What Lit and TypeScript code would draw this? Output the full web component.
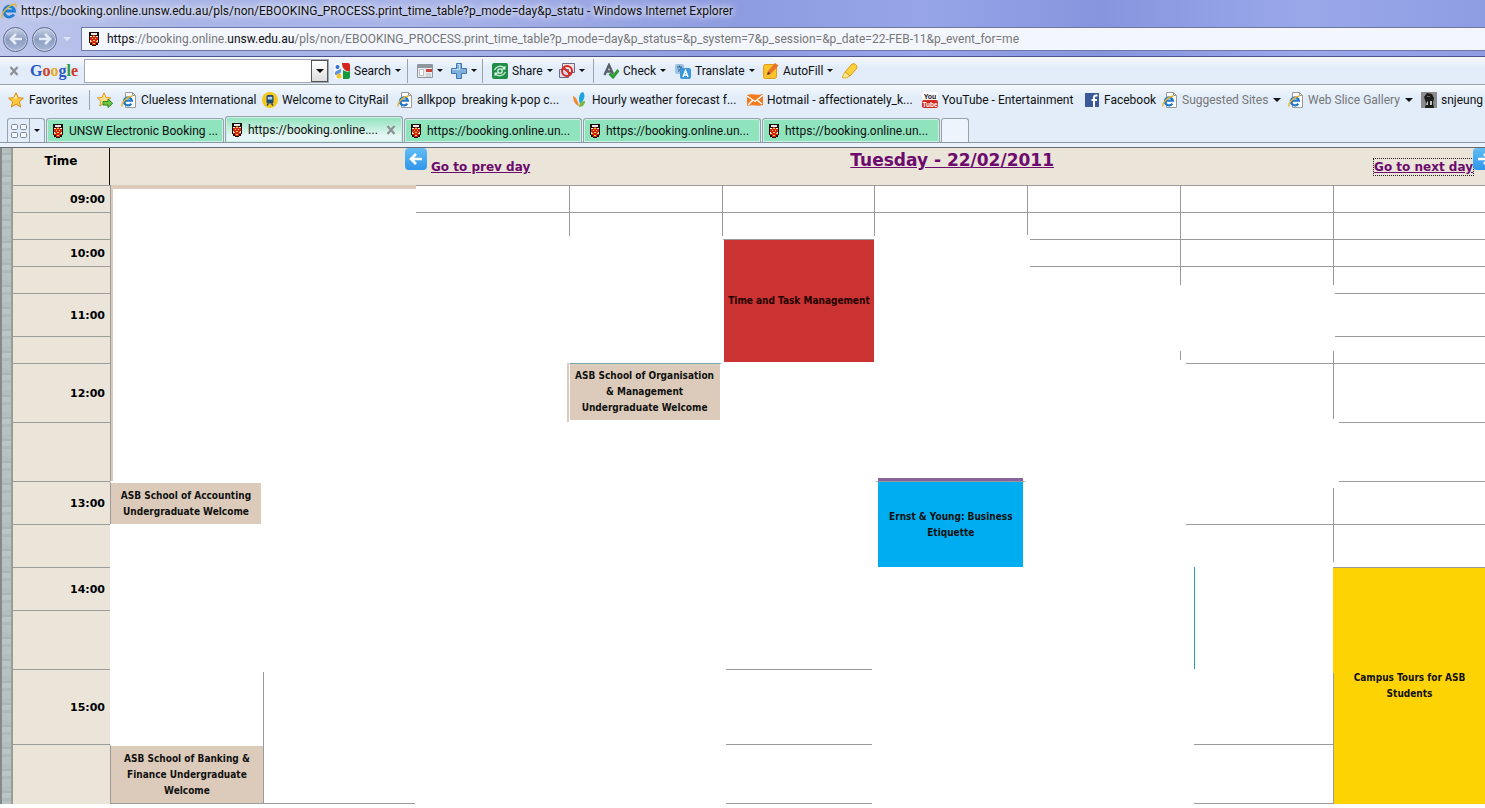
import { LitElement, html, css, svg, nothing, type TemplateResult } from "lit";
import { customElement, property } from "lit/decorators.js";
import { styleMap } from "lit/directives/style-map.js";
import { classMap } from "lit/directives/class-map.js";

const page = svg`<path d="M4.5.5h7l3 3v12h-10z" fill="#fff" stroke="#9a9a9a"/><path d="M11.500.5v3h3" fill="none" stroke="#9a9a9a"/>`;
const eMark = svg`<path d="M10.300 11.600a4 4 0 1 1 .6-2.900H3.500" fill="none" stroke="#1f78c8" stroke-width="2.200"/>
  <path d="M1.200 14.500C-.5 12 5 4.800 11.600 4" fill="none" stroke="#f0b323" stroke-width="1.400"/>`;

const ICONS: Record<string, TemplateResult> = {
  ie: svg`<path d="M12.800 11.600A5.400 5.400 0 1 1 13.600 8H4" fill="none" stroke="#1b7fd2" stroke-width="2.800"/>
    <path d="M1.600 15C-1.500 11.500 8 1 14.500 1.200c1 .3.800 1.800.2 3" fill="none" stroke="#e9b42c" stroke-width="1.400"/>`,
  iepage: svg`${page}${eMark}`,
  crest: svg`<g shape-rendering="crispEdges"><path d="M3 1h10v11h-1v2h-2v1H6v-1H4v-2H3z" fill="#1c0d08"/>
    <path d="M5 2h6v2H5z" fill="#e8e8ee"/><path d="M4 5h8v7H4z" fill="#f6ead2"/>
    <path d="M7 4h2v1h1v1h2v3h-1v2h1v1h-2v2H6v-2H4v-1h1V9H4V6h2V5h1z" fill="#d3261a"/>
    <path d="M7 5h2v1H7zM6 7h1v1H6zM9 7h1v1H9zM7 9h2v1H7zM5 10h1v1H5zM10 10h1v1h-1zM7 12h2v1H7z" fill="#ffcf3a"/></g>`,
  star: svg`<path d="M8 .8l2.200 4.900 5.200.5-4 3.500 1.200 5.300L8 12.300 3.400 15l1.200-5.300-4-3.500 5.200-.5z" fill="#fcc63d" stroke="#dd8a12"/>
    <path d="M8 3l1.300 3.500-4 .3z" fill="#fff0b0"/>`,
  staradd: svg`<path d="M7 .8l2 4.600 4.800.5-3.600 3.300L11.300 14 7 11.600 2.800 14l1-4.800L.4 5.900l4.700-.5z" fill="#ffe08a" stroke="#dd9a22"/>
    <path d="M6 9.500h5V7l4.700 4.300L11 15.500V13H6z" fill="#6cc644" stroke="#2f8a1c"/>`,
  rail: svg`<circle cx="8" cy="8" r="8" fill="#f6c71b"/><rect x="4.500" y="3" width="7" height="8.500" rx="1.500" fill="#1f4a7c"/>
    <path d="M5.800 4.800h4.400v2.700H5.800z" fill="#b9d4ec"/><path d="M5 13.500l1.500-2M11 13.500l-1.500-2" stroke="#1f4a7c" stroke-width="1.300"/>`,
  weather: svg`<path d="M1 4c3 1 5 5 6 10-4-1-6-6-6-10z" fill="#f08a2c"/><path d="M8 12C6 7 7 1 11 0c3 3 1 9-3 12z" fill="#1ba5dc"/>
    <path d="M7 15c0-4 3-6 6-6 0 3-2 6-6 6z" fill="#7cb83c"/>`,
  hotmail: svg`<path d="M0 3c5-2 10 1 16-1v11c-5 2-10-1-16 1z" fill="#f07a1c"/><path d="M0 4l8 5.500L16 3M1 13l5-5M15 12l-5-4" fill="none" stroke="#fff" stroke-width="1.400"/>`,
  youtube: svg`<path d="M0 0h16v8H0z" fill="#fff"/><rect y="8" width="16" height="8" rx="2" fill="#d5281f"/>
    <text x="8" y="6.500" text-anchor="middle" font-family="Liberation Sans" font-weight="700" font-size="7" fill="#111">You</text>
    <text x="8" y="14.500" text-anchor="middle" font-family="Liberation Sans" font-weight="700" font-size="6.500" fill="#fff">Tube</text>`,
  facebook: svg`<path d="M1 1h14v14H1z" fill="#3b5998"/><path d="M13.500 3.500H12c-1.500 0-2 .8-2 2V15M7.500 8h5.500" fill="none" stroke="#fff" stroke-width="2"/>`,
  photo: svg`<path d="M0 0h16v16H0z" fill="#8c8c8c"/><path d="M3 5l3-4 5 1 2 4-1 5 1 5H4l1-5z" fill="#1d1d1d"/><path d="M6 10l1-1v4H5zM9 9h2v4H9z" fill="#c4c4c4"/><path d="M6 4h3v1H6z" fill="#666"/>`,
  gsearch: svg`<rect width="16" height="16" rx="2" fill="#f8f8f8"/><path d="M8 0h6a2 2 0 0 1 2 2v6c-4 1-8-2-8-8z" fill="#d3271c"/>
    <path d="M9 7c3 2 5 2 7 1v6a2 2 0 0 1-2 2H9z" fill="#129a3c"/><circle cx="3.500" cy="4" r="2" fill="#2f6fd6"/><path d="M1 10c0-3 6-3 6-5v4c-1 2-3 3-6 3z" fill="#5b93e6"/>
    <circle cx="5" cy="13" r="2.500" fill="#f6c52b"/>`,
  panel: svg`<path d="M.5 1.500h15v13H.5z" fill="#e9edf0" stroke="#8f979e"/><path d="M1 2h14v3H1z" fill="#8f979e"/><path d="M9 6h6v3H9z" fill="#c8433a"/><path d="M2.500 6.500h4v6h-4zM9 11h5M9 13h5" fill="#fff" stroke="#b8bec4"/>`,
  plus: svg`<path d="M5.500.500h5v5h5v5h-5v5h-5v-5h-5v-5h5z" fill="#7fb0dc" stroke="#3e78ae"/><path d="M6.500 1.500h2v5h-7" fill="none" stroke="#c5def4"/>`,
  share: svg`<rect width="16" height="16" rx="2" fill="#1f8c48"/><circle cx="8" cy="8" r="2.200" fill="none" stroke="#dff5e4" stroke-width="1.300"/>
    <path d="M2.500 7c2-4 7-5 10-2M13.500 9c-2 4-7 5-10 2" fill="none" stroke="#bfe8c8" stroke-width="1.500"/><path d="M13.500 2.500v4h-4zM2.500 13.500v-4h4z" fill="#dff5e4"/>`,
  block: svg`<path d="M3.500.5h12v9h-12z" fill="#f4e4e4" stroke="#6a6a8c"/><path d="M.5 6.500h9v8h-9z" fill="#dcdcec" stroke="#6a6a8c"/>
    <circle cx="8" cy="8" r="5" fill="none" stroke="#d62a24" stroke-width="2"/><path d="M4.500 4.500l7 7" stroke="#d62a24" stroke-width="2"/>`,
  check: svg`<path d="M1.500 12L6 2l4 9M3.500 8.500h5" fill="none" stroke="#59626a" stroke-width="2.400"/><path d="M6.500 10.500l3.500 3.500 5.500-7" fill="none" stroke="#2f9a34" stroke-width="3"/>`,
  translate: svg`<rect x="0" y="1" width="9" height="10" rx="2" fill="#9cc4e4"/><path d="M2 4h5M4.500 2.500V4M3 8.500c2-1 3-2.500 3-4.500M3 5.500l3 3" stroke="#2d5f92" fill="none"/>
    <rect x="5" y="5" width="11" height="11" rx="2" fill="#3b97d8"/><path d="M8 14L10.500 7.500 13 14M9 12h3" stroke="#fff" stroke-width="1.400" fill="none"/>`,
  autofill: svg`<rect x=".5" y="1.500" width="13" height="14" rx="2" fill="#fbc32c" stroke="#e29a16"/><path d="M4 12l1-4 7-8 3.500 2.500-7.500 8z" fill="#e8742a"/><path d="M4 12l1-3.500L7.500 11z" fill="#5a3a1c"/>`,
  marker: svg`<path d="M3 9l7-8c3-1 5 1 5 4l-7 8z" fill="#fbd03a" stroke="#d99b17"/><path d="M3 9l5 4-4 2-4-.5z" fill="#ffe98c" stroke="#d99b17" stroke-width=".8"/>`,
  quick: svg`<g fill="#f4f7fb" stroke="#7b8696"><rect x=".5" y="1.500" width="6" height="5" rx="1"/><rect x="9.500" y="1.500" width="6" height="5" rx="1"/><rect x=".5" y="9.500" width="6" height="5" rx="1"/><rect x="9.500" y="9.500" width="6" height="5" rx="1"/></g>`,
  left: svg`<path d="M8 3L3 8l5 5M3.500 8H14" fill="none" stroke="currentColor" stroke-width="2.600"/>`,
  right: svg`<path d="M8 3l5 5-5 5M12.500 8H2" fill="none" stroke="currentColor" stroke-width="2.600"/>`,
  close: svg`<path d="M4.500 4l7 8M11.500 4l-7 8" fill="none" stroke="#8d9095" stroke-width="2.200"/>`,
};

const icon = (name: string) =>
  html`<svg class="icon" viewBox="0 0 16 16" aria-hidden="true">${ICONS[name]}</svg>`;

const shared = css`
  * { box-sizing: border-box; }
  .icon { width: 16px; height: 16px; flex: none; display: block; }
  .caret { width: 0; height: 0; flex: none; border: 3px solid transparent; border-top-color: #111; border-bottom: 0; }
  button { font: inherit; color: inherit; background: none; border: 0; padding: 0; margin: 0; white-space: nowrap; }
  a { color: inherit; text-decoration: none; }
`;

interface Bookmark { label: string; icon: string; width: number; menu?: boolean; }
const BOOKMARKS: Bookmark[] = [
  { label: "Clueless International", icon: "iepage", width: 141 },
  { label: "Welcome to CityRail", icon: "rail", width: 135 },
  { label: "allkpop  breaking k-pop c...", icon: "iepage", width: 175 },
  { label: "Hourly weather forecast f...", icon: "weather", width: 175 },
  { label: "Hotmail - affectionately_k...", icon: "hotmail", width: 175 },
  { label: "YouTube - Entertainment", icon: "youtube", width: 162 },
  { label: "Facebook", icon: "facebook", width: 78 },
  { label: "Suggested Sites", icon: "iepage", width: 126, menu: true },
  { label: "Web Slice Gallery", icon: "iepage", width: 133, menu: true },
  { label: "snjeung", icon: "photo", width: 64 },
];

interface Tool { label?: string; name: string; icon: string; width: number; menu?: boolean; rule?: boolean; }
const TOOLS: Tool[] = [
  { label: "Search", name: "Search", icon: "gsearch", width: 73, menu: true },
  { name: "Toolbar layout", icon: "panel", width: 34, menu: true, rule: true },
  { name: "Add gadget", icon: "plus", width: 31, menu: true },
  { label: "Share", name: "Share", icon: "share", width: 67, menu: true, rule: true },
  { name: "Pop-up blocker", icon: "block", width: 34, menu: true },
  { label: "Check", name: "Check", icon: "check", width: 72, menu: true, rule: true },
  { label: "Translate", name: "Translate", icon: "translate", width: 88, menu: true },
  { label: "AutoFill", name: "AutoFill", icon: "autofill", width: 79, menu: true },
  { name: "Highlight", icon: "marker", width: 16 },
];

const TABS = [
  "UNSW Electronic Booking ...",
  "https://booking.online....",
  "https://booking.online.un...",
  "https://booking.online.un...",
  "https://booking.online.un...",
];

@customElement("browser-chrome")
export class BrowserChrome extends LitElement {
  static styles = [shared, css`
    :host { display: block; font: 12px/16px Roboto, "Open Sans", sans-serif; color: #111; }
    .frame { background: linear-gradient(90deg, #bfc8ec 0, #a9b5e6 12%, #a8b4e8 28%, #8d9be0 50%, #97a5e8 62%, #8695de 74%, #9aa8ea 88%, #8e9ce2 100%); border-bottom: 1px solid #4a5384; }
    .title { display: flex; align-items: center; gap: 4px; height: 22px; padding-left: 1px; white-space: nowrap; }
    .title h1 { margin: 0; font: inherit; padding-right: 8px; text-shadow: 0 0 6px #fff, 0 0 8px #fff; }
    .nav { display: flex; align-items: center; height: 34px; padding-left: 3px; }
    .round { width: 25px; height: 25px; margin-right: 4px; border-radius: 50%; border: 1px solid #5c6a8c; color: #e4ebf6; background: linear-gradient(#c9d3e6, #8c9cc0 50%, #a9b8d8); box-shadow: inset 0 0 0 1px #cdd7ea; display: flex; align-items: center; justify-content: center; }
    .history { display: flex; align-items: center; padding: 0 10px 0 2px; height: 16px; }
    .history .caret { border-width: 4px; border-top-color: #dde3f7; border-bottom: 0; }
    .address { flex: 1; min-width: 0; height: 24px; display: flex; align-items: center; gap: 5px; padding-left: 4px; background: #f3f6fd; border: 1px solid #6d77a8; border-right: 0; white-space: nowrap; overflow: hidden; color: #777; }
    .address b { font-weight: 400; color: #111; }
    .bar { background: linear-gradient(#f6f9fd, #e2edf9 40%, #e2edf9); }
    .google { display: flex; align-items: center; height: 28px; border-bottom: 1px solid #9aa3ab; white-space: nowrap; padding-left: 6px; }
    .google .shut { margin-right: 8px; }
    .logo { width: 54px; font: 700 16px/20px "Liberation Serif", serif; }
    .blue { color: #2a56c6; } .red { color: #d23a2c; } .gold { color: #e8ab1c; } .green { color: #2f9a44; }
    .query { display: flex; width: 245px; height: 24px; margin-right: 5px; border: 1px solid #a3a9b3; background: #fff; }
    .query input { flex: 1; min-width: 0; border: 0; padding: 0 4px; font: inherit; background: none; outline: 0; }
    .query button { width: 17px; display: flex; align-items: center; justify-content: center; border: 1px solid #555; background: linear-gradient(#fff, #ddd); }
    .query .caret { border-width: 4px; border-bottom: 0; }
    .tool { display: flex; align-items: center; gap: 4px; flex: none; }
    .rule { width: 1px; height: 24px; background: #9ba3ad; margin: 0 9px 0 0; flex: none; }
    .marks { display: flex; align-items: center; height: 30px; padding-left: 8px; overflow: hidden; white-space: pre; }
    .fav { display: flex; gap: 5px; align-items: center; width: 81px; flex: none; }
    .marks .rule { height: 20px; margin-right: 7px; }
    .add { width: 24px; flex: none; }
    .mark { display: flex; gap: 4px; align-items: center; flex: none; }
    .mark.menu { color: #777; }
    .mark .caret { border-width: 4px; border-bottom: 0; margin-left: 1px; }
    .tabs { display: flex; align-items: flex-end; height: 28px; padding-left: 7px; gap: 1px; border-bottom: 1px solid #8b96a8; background: #e2edf9; }
    .quick { display: flex; height: 24px; width: 38px; border: 1px solid #98a1ae; border-bottom: 0; border-radius: 3px 3px 0 0; }
    .quick button { display: flex; align-items: center; justify-content: center; width: 14px; }
    .quick .all { width: 23px; border-right: 1px solid #98a1ae; }
    .tab { display: flex; align-items: center; gap: 3px; flex: 0 1 178px; min-width: 0; height: 24px; padding: 0 3px; white-space: nowrap; background: #8fe3bd; border: 1px solid #98a1ae; border-bottom: 0; border-radius: 3px 3px 0 0; box-shadow: inset 0 0 0 1px #c9f3e0; }
    .tab .text { flex: 1; min-width: 0; overflow: hidden; text-align: left; }
    .tab.active { height: 26px; background: linear-gradient(#8fe3bd, #e6f6f4 75%); }
    .fresh { width: 28px; height: 24px; border: 1px solid #98a1ae; border-bottom: 0; border-radius: 3px 3px 0 0; background: #eef4fb; }
    .edge { height: 5px; background: #eaf1fa; border-bottom: 1px solid #666b70; }
  `];

  render() {
    return html`
      <header class="frame">
        <div class="title">${icon("ie")}<h1>https://booking.online.unsw.edu.au/pls/non/EBOOKING_PROCESS.print_time_table?p_mode=day&amp;p_statu - Windows Internet Explorer</h1></div>
        <div class="nav">
          <button class="round" aria-label="Back">${icon("left")}</button>
          <button class="round" aria-label="Forward">${icon("right")}</button>
          <button class="history" aria-label="Recent pages"><span class="caret"></span></button>
          <div class="address">${icon("crest")}<span><b>https</b>://booking.online.<b>unsw.edu.au</b>/pls/non/EBOOKING_PROCESS.print_time_table?p_mode=day&amp;p_status=&amp;p_system=7&amp;p_session=&amp;p_date=22-FEB-11&amp;p_event_for=me</span></div>
        </div>
      </header>
      <div class="bar google">
        <button class="shut" aria-label="Close toolbar">${icon("close")}</button>
        <span class="logo"><span class="blue">G</span><span class="red">o</span><span class="gold">o</span><span class="blue">g</span><span class="green">l</span><span class="red">e</span></span>
        <div class="query"><input type="text" aria-label="Google search" /><button aria-label="Search history"><span class="caret"></span></button></div>
        ${TOOLS.map((t) => html`
          ${t.rule ? html`<span class="rule"></span>` : nothing}
          <button class="tool" aria-label=${t.name} style=${styleMap({ width: `${t.width}px` })}>
            ${icon(t.icon)}${t.label ? html`<span>${t.label}</span>` : nothing}${t.menu ? html`<span class="caret"></span>` : nothing}
          </button>`)}
      </div>
      <nav class="bar marks">
        <button class="fav">${icon("star")}Favorites</button>
        <span class="rule"></span>
        <button class="add" aria-label="Add to favorites bar">${icon("staradd")}</button>
        ${BOOKMARKS.map((b) => html`<a href="#" class=${classMap({ mark: true, menu: !!b.menu })} style=${styleMap({ width: `${b.width}px` })}>${icon(b.icon)}<span>${b.label}</span>${b.menu ? html`<span class="caret"></span>` : nothing}</a>`)}
      </nav>
      <div class="tabs">
        <div class="quick"><button class="all" aria-label="Quick tabs">${icon("quick")}</button><button aria-label="Tab list"><span class="caret"></span></button></div>
        ${TABS.map((t, i) => html`<button class=${classMap({ tab: true, active: i === 1 })}>${icon("crest")}<span class="text">${t}</span>${i === 1 ? icon("close") : nothing}</button>`)}
        <button class="fresh" aria-label="New tab"></button>
      </div>
      <div class="edge"></div>`;
  }
}

/* A rule is given as the gaps left free at its start and its end. */
type Span = [number, number];
interface Cell { top?: Span; left?: Span; bottom?: Span; shift?: number; kind?: string; text?: string; rows?: number; }

const HEIGHTS = [27, 27, 27, 27, 43, 27, 59, 59, 43, 43, 43, 59, 75, 60];
const TIMES: Record<number, string> = { 0: "09:00", 2: "10:00", 4: "11:00", 6: "12:00", 8: "13:00", 10: "14:00", 12: "15:00" };
const COLUMNS = 9;
const ALL: Span = [0, 0];

const CELLS: Record<string, Cell> = {
  "0,0": { top: ALL, kind: "edge shade" }, "0,1": { top: ALL, kind: "shade", left: [0, 23] }, "0,2": { top: ALL },
  "0,3": { top: ALL, left: ALL }, "0,4": { top: ALL, left: ALL }, "0,5": { top: ALL, left: ALL },
  "0,6": { top: ALL, left: ALL }, "0,7": { top: ALL, left: ALL }, "0,8": { top: ALL, left: ALL },
  "1,0": { kind: "edge" }, "1,2": { top: ALL }, "1,3": { top: ALL, left: [0, 3] }, "1,4": { top: ALL, left: [0, 3] },
  "1,5": { top: ALL, left: [0, 3] }, "1,6": { top: ALL, left: [0, 4] }, "1,7": { top: ALL, left: ALL }, "1,8": { top: ALL, left: ALL },
  "2,0": { kind: "edge" }, "2,4": { kind: "event red", rows: 4, text: "Time and Task Management" },
  "2,6": { top: [3, 0] }, "2,7": { top: ALL, left: ALL }, "2,8": { top: ALL, left: ALL },
  "3,0": { kind: "edge" }, "3,6": { top: [3, 0] }, "3,7": { top: ALL, left: [0, 8] }, "3,8": { top: ALL, left: [0, 8] },
  "4,0": { kind: "edge" }, "4,8": { top: [2, 0] },
  "5,0": { kind: "edge" }, "5,7": { left: [15, 3] }, "5,8": { top: [2, 0], left: [15, 0] },
  "6,0": { kind: "edge" }, "6,2": { kind: "sliver" }, "6,3": { kind: "event tan lined", text: "ASB School of Organisation & Management Undergraduate Welcome" },
  "6,7": { top: [6, 0] }, "6,8": { top: ALL, left: [0, 3] },
  "7,0": { kind: "edge" }, "7,5": { kind: "plum", bottom: [4, 4] }, "7,8": { top: [6, 0] },
  "8,0": { kind: "event tan start", text: "ASB School of Accounting Undergraduate Welcome" },
  "8,5": { kind: "event sky", rows: 2, text: "Ernst & Young: Business Etiquette" }, "8,8": { top: [6, 0], left: [7, 0] },
  "9,7": { top: [6, 0] }, "9,8": { top: ALL, left: [0, 5] },
  "10,7": { kind: "teal", left: ALL, shift: 14 }, "10,8": { kind: "event gold", rows: 4, text: "Campus Tours for ASB Students", left: [105, 0] },
  "11,7": { kind: "teal", left: ALL, shift: 14 },
  "12,1": { left: [3, 0] }, "12,4": { top: [4, 2] },
  "13,0": { kind: "event tan start closing", text: "ASB School of Banking & Finance Undergraduate Welcome", bottom: ALL },
  "13,1": { left: ALL, bottom: [0, 1] }, "13,4": { top: [4, 2], bottom: [4, 2] }, "13,7": { top: [14, 0], bottom: [14, 0] },
};

@customElement("day-timetable")
export class DayTimetable extends LitElement {
  @property() day = "Tuesday - 22/02/2011";

  static styles = [shared, css`
    :host { display: block; padding-left: 11px; margin-right: -1px; font-family: "DejaVu Sans", Verdana, sans-serif; background: linear-gradient(90deg, #85898a 0 2px, transparent 2px), repeating-linear-gradient(#b3bfbf 0 5px, #a9b6b6 5px 7px, #bac6c6 7px 12px, #afbbbb 12px 15px, #b7c3c3 15px 22px); }
    table { width: 100%; table-layout: fixed; border-collapse: separate; border-spacing: 0; background: #fff; border-left: 2px solid #9b9b98; }
    .times { width: 97px; }
    th, td { padding: 0; }
    thead th { height: 37px; background: #eae4d9; vertical-align: top; overflow: hidden; }
    .corner { border-right: 1px solid #111; font-size: 12px; line-height: 26px; }
    .days { display: flex; justify-content: space-between; margin: 0 -9px 0 295px; height: 37px; color: #6d0a6d; white-space: nowrap; }
    .days a { display: flex; text-decoration: underline; font-size: 12px; line-height: 16px; }
    .days .text { margin-top: 11px; height: 16px; }
    .days .date { font-size: 17px; line-height: 25px; }
    .arrow { display: flex; align-items: center; justify-content: center; width: 22px; height: 22px; border-radius: 4px; background: linear-gradient(#63bdf6, #2f96ea); color: #fff; flex: none; }
    .prev { gap: 4px; }
    .next .text { outline: 1px dotted #222; }
    tbody th { border-top: 1px solid #9b9b98; background: #eae4d9; font-size: 11px; line-height: 16px; text-align: right; padding: 2px 5px 0 0; }
    .cell {
      --rule: #9b9b9b; --weight: 1px;
      --ts: 0px; --te: 100%; --ls: 0px; --le: 100%; --bs: 0px; --be: 100%; --shift: 0px;
      background-image: linear-gradient(var(--rule) 0 0), linear-gradient(var(--rule) 0 0), linear-gradient(var(--rule) 0 0);
      background-repeat: no-repeat;
      background-position: var(--ts) 0, var(--shift) var(--ls), var(--bs) 100%;
      background-size: calc(100% - var(--ts) - var(--te)) 1px, 1px calc(100% - var(--ls) - var(--le)), calc(100% - var(--bs) - var(--be)) var(--weight);
    }
    .edge { border-left: 1px solid #9b9b9b; box-shadow: inset 2px 0 #dccbba; }
    .shade { box-shadow: inset 0 4px #dccbba; }
    .edge.shade { box-shadow: inset 2px 4px #dccbba; }
    .sliver { border-right: 2px solid #dccbba; }
    .plum { --rule: #86639a; --weight: 3px; }
    .teal { --rule: #2f9bb8; }
    .event { font-weight: 700; font-size: 10px; line-height: 16px; text-align: center; vertical-align: middle; padding: 0 3px; border-top: 1px solid #9b9b9b; color: #111; font-family: "DejaVu Sans Condensed", "Noto Sans", sans-serif; }
    .red { background-color: #cb3232; border-left: 2px solid #fff; border-bottom: 1px solid #fff; color: #200; }
    .tan { background-color: #dccbba; border-right: 2px solid #fff; }
    .lined { border-left: 1px solid #fff; border-top-color: #6fa9b4; border-bottom: 2px solid #fff; }
    .start { border-left: 1px solid #9b9b9b; border-top: 2px solid #fff; }
    .closing { border-right: 0; }
    .sky { background-color: #00adf0; border-left: 4px solid #fff; border-right: 4px solid #fff; }
    .gold { background-color: #fed304; }
  `];

  private cell(row: number, col: number) {
    const c: Cell = CELLS[`${row},${col}`] ?? {};
    const vars: Record<string, string> = {};
    const put = (key: string, span?: Span) => {
      if (!span) return;
      vars[`--${key}s`] = `${span[0]}px`;
      vars[`--${key}e`] = `${span[1]}px`;
    };
    put("t", c.top);
    put("l", c.left);
    put("b", c.bottom);
    if (c.shift) vars["--shift"] = `${c.shift}px`;
    return html`<td class="cell ${c.kind ?? ""}" rowspan=${c.rows ?? 1} style=${styleMap(vars)}>${c.text ?? nothing}</td>`;
  }

  private covered(row: number, col: number) {
    for (let r = 0; r < row; r++) {
      if (r + (CELLS[`${r},${col}`]?.rows ?? 1) > row) return true;
    }
    return false;
  }

  render() {
    const columns = Array.from({ length: COLUMNS }, (_, i) => i);
    return html`<table>
      <colgroup><col class="times" />${columns.map(() => html`<col />`)}</colgroup>
      <thead><tr>
        <th class="corner" scope="col">Time</th>
        <th colspan=${COLUMNS}><div class="days">
          <a class="prev" href="#"><span class="arrow">${icon("left")}</span><span class="text">Go to prev day</span></a>
          <a class="date" href="#">${this.day}</a>
          <a class="next" href="#"><span class="text">Go to next day</span><span class="arrow">${icon("right")}</span></a>
        </div></th>
      </tr></thead>
      <tbody>${HEIGHTS.map((h, r) => html`<tr style=${styleMap({ height: `${h}px` })}>
        <th scope="row">${TIMES[r] ?? nothing}</th>
        ${columns.map((c) => (this.covered(r, c) ? nothing : this.cell(r, c)))}
      </tr>`)}</tbody>
    </table>`;
  }
}

@customElement("app-root")
export class AppRoot extends LitElement {
  static styles = css`:host { display: block; background: #fff; overflow: hidden; }`;
  render() {
    return html`<browser-chrome></browser-chrome><main><day-timetable></day-timetable></main>`;
  }
}
